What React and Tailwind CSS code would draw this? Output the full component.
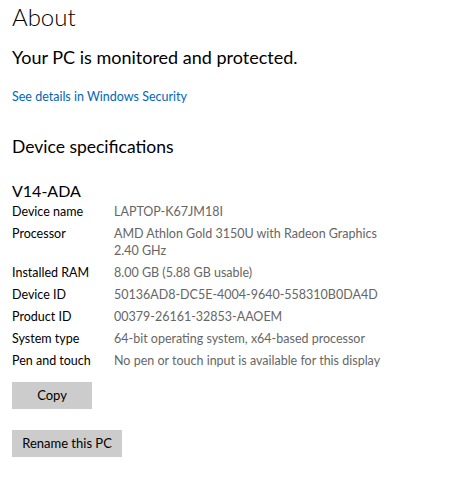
const specs = [
  ["Device name", ["LAPTOP-K67JM18I"]],
  ["Processor", ["AMD Athlon Gold 3150U with Radeon Graphics", "2.40 GHz"]],
  ["Installed RAM", ["8.00 GB (5.88 GB usable)"]],
  ["Device ID", ["50136AD8-DC5E-4004-9640-558310B0DA4D"]],
  ["Product ID", ["00379-26161-32853-AAOEM"]],
  ["System type", ["64-bit operating system, x64-based processor"]],
  ["Pen and touch", ["No pen or touch input is available for this display"]],
];

export default function App() {
  return (
    <div className="min-h-[477px] w-[450px] bg-white pl-3 pt-px font-['Lato',sans-serif] text-black">
      <h1 className="text-[24px] font-light leading-[32px]">About</h1>
      <p className="mt-3 text-[18px] leading-[24px]">Your PC is monitored and protected.</p>
      <a href="#" className="mt-[19px] block text-[12.5px] leading-[18px] text-[#0067b8]">
        See details in Windows Security
      </a>

      <h2 className="mt-[29px] text-[17.5px] leading-[24px]">Device specifications</h2>
      <div className="mt-[23px] text-[16px] leading-[18px]">V14-ADA</div>

      {/* spec table */}
      <div className="text-[12.5px] leading-[17px]">
        {specs.map(([label, values]) => (
          <div key={label} className="flex pb-[2px] pt-[3px]">
            <div className="w-[102px] shrink-0">{label}</div>
            <div className="text-[#666666]">
              {values.map((v) => (
                <div key={v}>{v}</div>
              ))}
            </div>
          </div>
        ))}
      </div>

      <div className="mt-[11px] flex flex-col items-start gap-[21px]">
        <button className="h-[27px] w-[80px] bg-[#cccccc] text-[13px]">Copy</button>
        <button className="h-[27px] w-[110px] bg-[#cccccc] text-[13px]">Rename this PC</button>
      </div>
    </div>
  );
}
